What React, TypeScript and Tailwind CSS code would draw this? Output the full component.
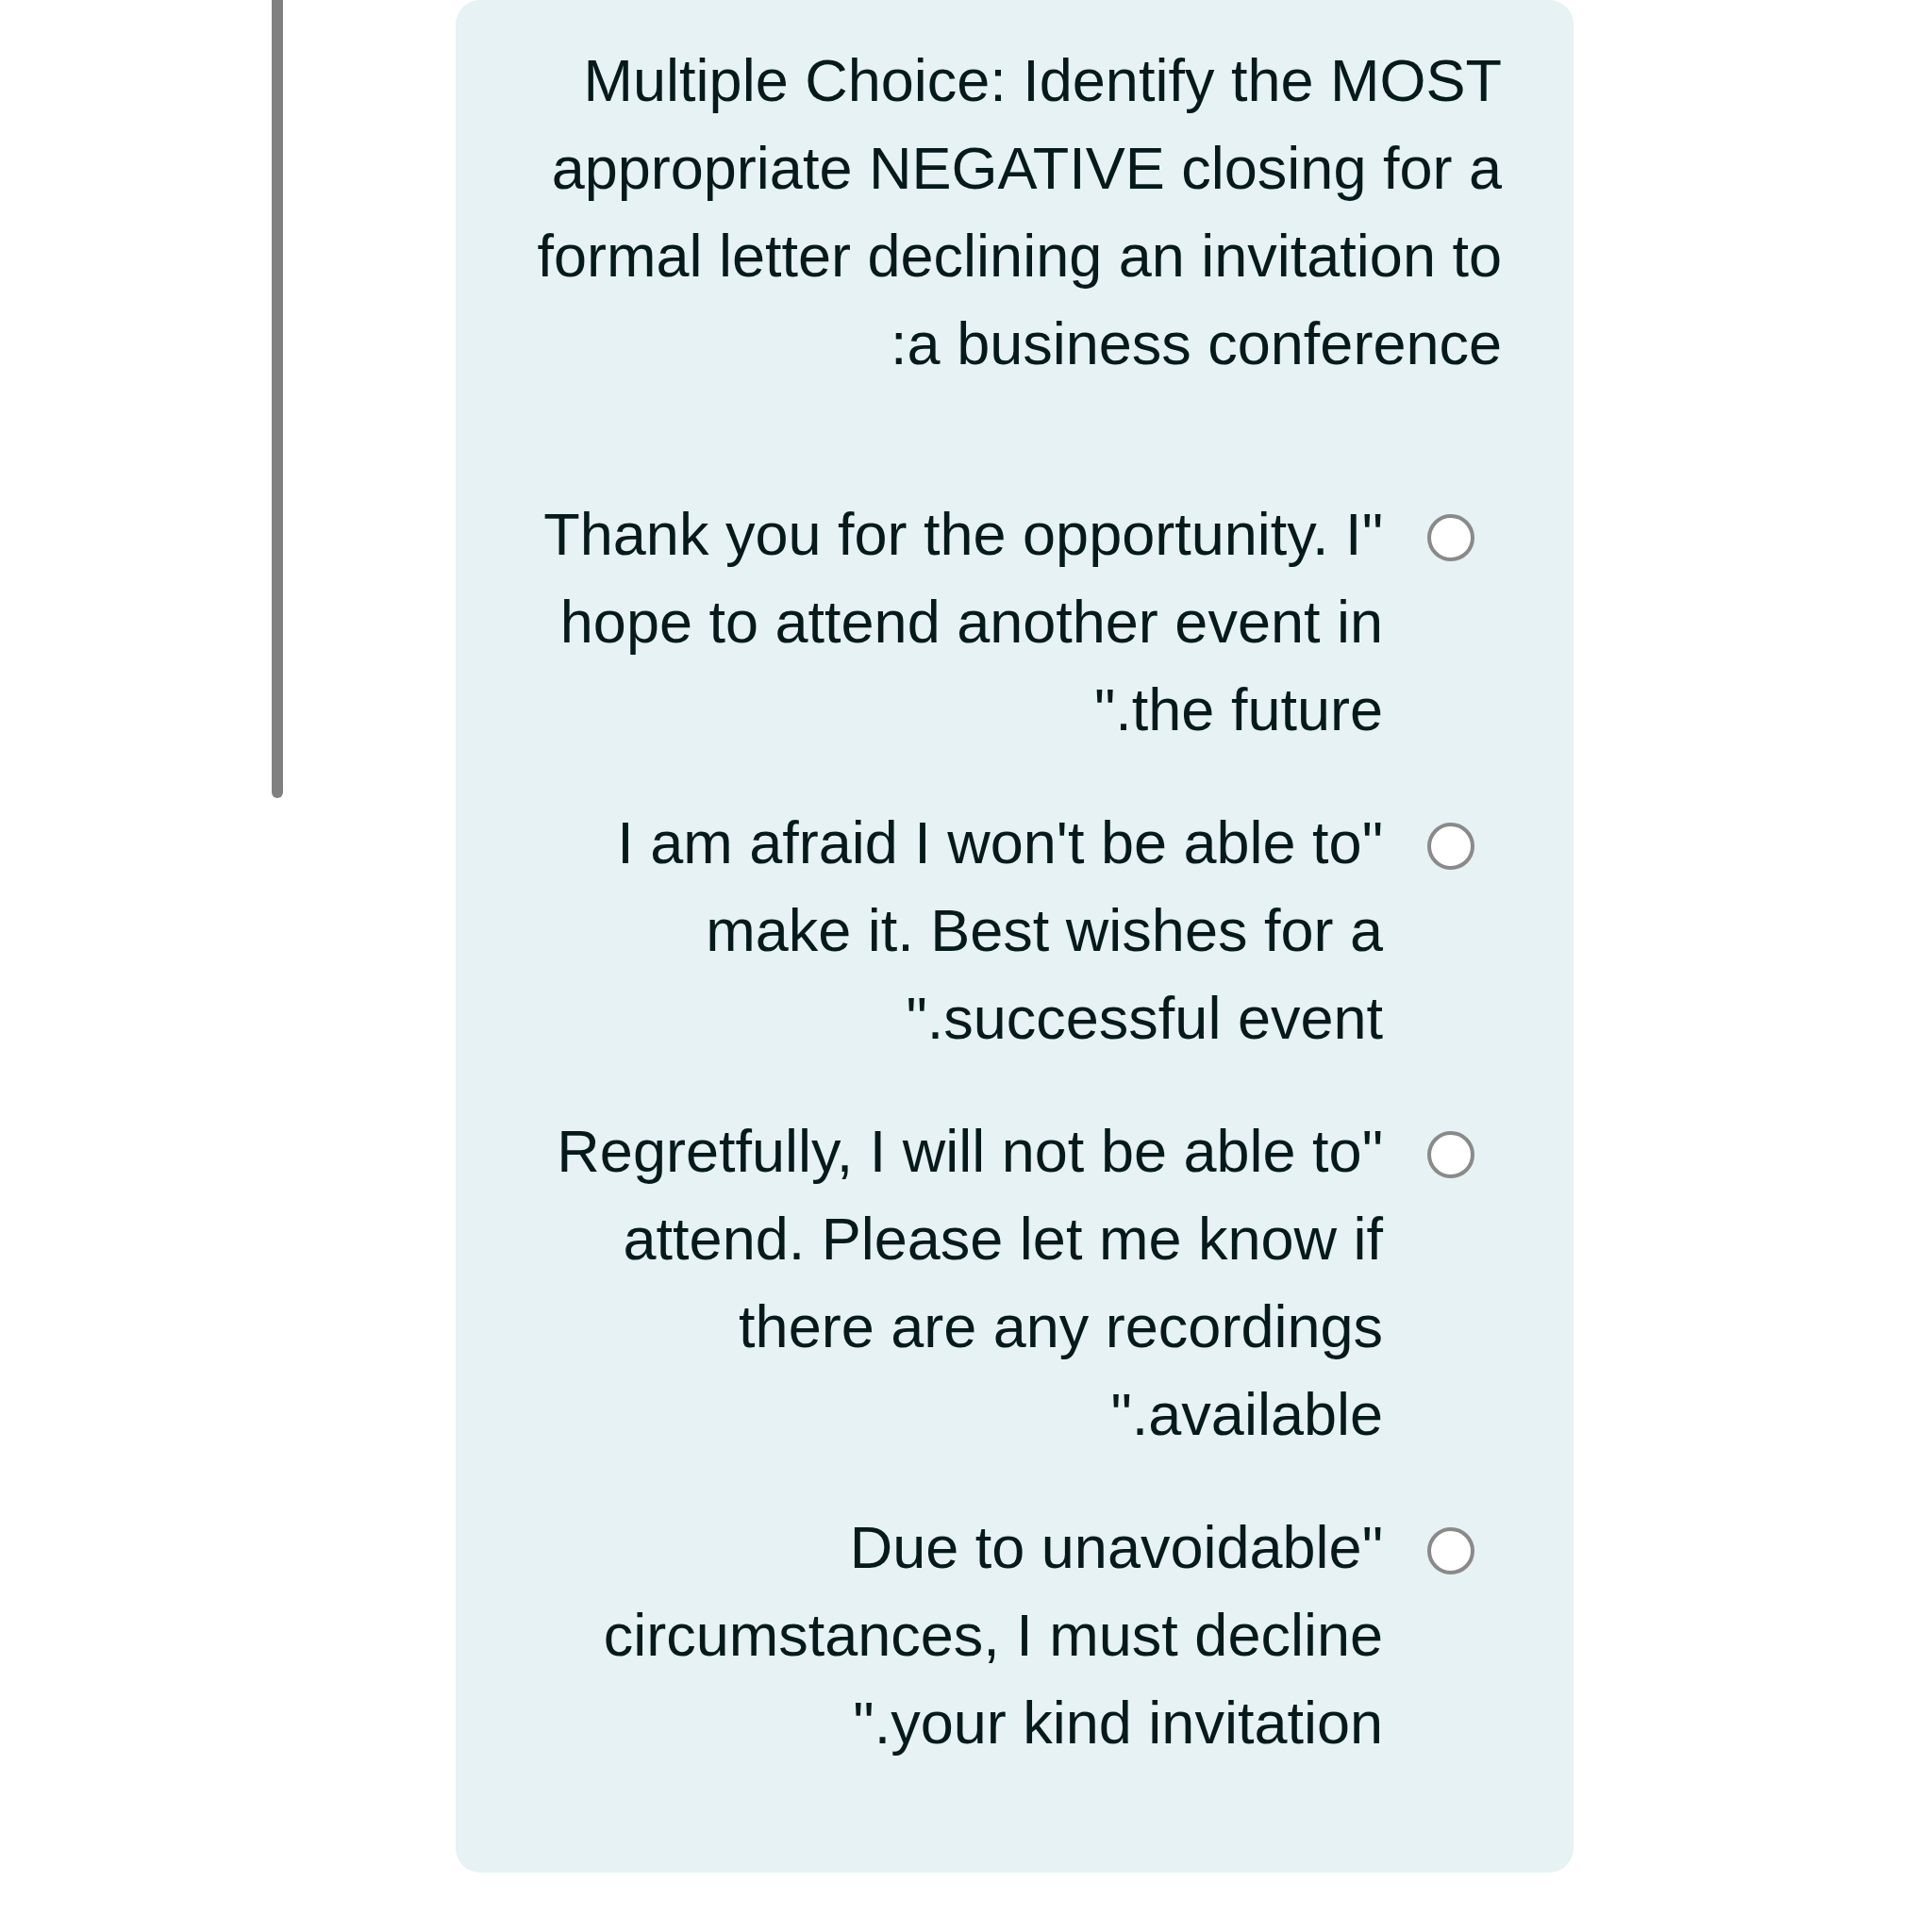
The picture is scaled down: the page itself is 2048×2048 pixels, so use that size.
import React from "react";

const options = [
  "\"Thank you for the opportunity. I hope to attend another event in the future.\"",
  "\"I am afraid I won't be able to make it. Best wishes for a successful event.\"",
  "\"Regretfully, I will not be able to attend. Please let me know if there are any recordings available.\"",
  "\"Due to unavoidable circumstances, I must decline your kind invitation.\"",
];

export default function App() {
  return (
    <div
      className="w-[2048px] h-[2048px] bg-white overflow-hidden flex items-start"
      style={{ fontFamily: '"Liberation Sans", Arial, Helvetica, sans-serif' }}
    >
      <div className="ml-[288px] w-[12px] h-[846px] bg-[#808080] rounded-b-full shrink-0" />
      <div
        dir="rtl"
        className="ml-[183px] w-[1185px] bg-[#e6f2f4] rounded-[26px] pt-[39px] pb-[112px] px-[76px] text-[#061a1c]"
      >
        <p className="text-[63px] leading-[93px] text-right">
          Multiple Choice: Identify the MOST appropriate NEGATIVE closing for a formal letter declining an invitation to a business conference:
        </p>
        <div className="mt-[109px] flex flex-col gap-[48px]">
          {options.map((o, i) => (
            <label key={i} className="flex items-start gap-[47px] pr-[29px]">
              <span className="mt-[25px] w-[50px] h-[50px] rounded-full border-[4px] border-[#8a8a8a] bg-white shrink-0" />
              <span className="text-[63px] leading-[93px] text-right flex-1">{o}</span>
            </label>
          ))}
        </div>
      </div>
    </div>
  );
}
